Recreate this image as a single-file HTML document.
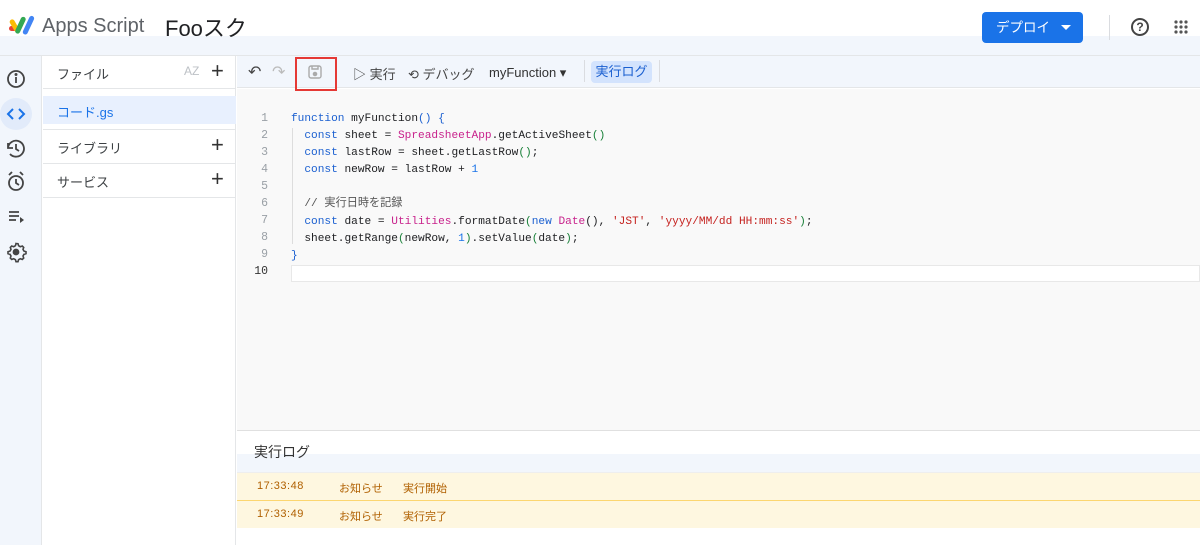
<!DOCTYPE html><html><head><meta charset="utf-8"><style>
*{margin:0;padding:0;box-sizing:border-box}
body{width:1200px;height:545px;overflow:hidden;background:#fff;font-family:"Liberation Sans","Noto Sans CJK JP",sans-serif;position:relative;color:#3c4043}
.a{position:absolute}
.code{font-family:"Liberation Mono","Noto Sans CJK JP",monospace;font-size:11.15px;color:#202124}
.ln{position:absolute;left:236px;width:32px;text-align:right;color:#9aa0a6;font-family:"Liberation Mono",monospace;font-size:11.5px}
.k{color:#1a5fd0}.p{color:#c8228c}.s{color:#c5221f}.n{color:#1a73e8}.g{color:#188038}
</style></head><body>
<div class="a" style="left:0;top:36px;width:1200px;height:19px;background:#f2f6fc"></div>
<div class="a" style="left:0;top:55px;width:1200px;height:1px;background:#e4e6e8"></div>
<svg class="a" style="left:9px;top:14px" width="30" height="24" viewBox="0 0 30 24">
<rect x="0" y="12" width="12" height="5" rx="2.5" fill="#ea4335"/>
<rect x="3" y="5" width="5" height="14" rx="2.5" transform="rotate(-30 5 12)" fill="#fbbc04"/>
<rect x="9" y="2" width="5" height="18" rx="2.5" transform="rotate(25 11 11)" fill="#34a853"/>
<rect x="17" y="1" width="5" height="20" rx="2.5" transform="rotate(25 19 11)" fill="#4285f4"/>
</svg>
<div class="a" style="left:42px;top:15px;font-size:20px;color:#5f6368">Apps Script</div>
<div class="a" style="left:165px;top:11px;font-size:22px;color:#202124">Fooスク</div>
<div class="a" style="left:982px;top:12px;width:101px;height:31px;background:#1a73e8;border-radius:4px;color:#fff;font-size:13.5px;line-height:31px;padding-left:14px">デプロイ<span style="position:absolute;left:79px;top:13px;border-left:5px solid transparent;border-right:5px solid transparent;border-top:5px solid #fff"></span></div>
<div class="a" style="left:1109px;top:15px;width:1px;height:25px;background:#dadce0"></div>
<div class="a" style="left:1131px;top:18px;width:18px;height:18px;border:2px solid #444;border-radius:50%;font-size:12px;font-weight:bold;text-align:center;line-height:14px;color:#444">?</div>
<svg class="a" style="left:1174px;top:20px" width="14" height="14"><g fill="#555"><circle cx="2" cy="2" r="1.6"/><circle cx="7" cy="2" r="1.6"/><circle cx="12" cy="2" r="1.6"/><circle cx="2" cy="7" r="1.6"/><circle cx="7" cy="7" r="1.6"/><circle cx="12" cy="7" r="1.6"/><circle cx="2" cy="12" r="1.6"/><circle cx="7" cy="12" r="1.6"/><circle cx="12" cy="12" r="1.6"/></g></svg>
<div class="a" style="left:0;top:56px;width:42px;height:489px;background:#f2f6fc;border-right:1px solid #e4e6e8"></div>
<svg class="a" style="left:0;top:56px" width="42" height="220" fill="none" stroke="#444" stroke-width="1.8">
<circle cx="16" cy="23" r="8"/><line x1="16" y1="21" x2="16" y2="27"/><circle cx="16" cy="18.5" r="0.6" fill="#444"/>
<circle cx="16" cy="58" r="16" fill="#e2ebfa" stroke="none"/><path d="M13 53l-5 5 5 5M19 53l5 5-5 5" stroke="#1a73e8" stroke-width="2"/>
<path d="M8 92a8 8 0 1 1 2 6M8 87v5h5M16 88v5l3 2"/>
<circle cx="16" cy="127" r="7"/><path d="M16 123v4l3 2M9 119l3-3M23 119l-3-3"/>
<path d="M9 156h10M9 160h10M9 164h7" /><path d="M20 161l4 3-4 3z" fill="#444" stroke="none"/>
<circle cx="16" cy="196" r="2.5" fill="#444"/><path d="M16 187.5l2 .2.6 2 1.7 1 2-.7 1.4 1.4-.7 2 1 1.7 2 .6v2l-2 .6-1 1.7.7 2-1.4 1.4-2-.7-1.7 1-.6 2h-2l-.6-2-1.7-1-2 .7-1.4-1.4.7-2-1-1.7-2-.6v-2l2-.6 1-1.7-.7-2 1.4-1.4 2 .7 1.7-1 .6-2z" stroke-width="1.6"/>
</svg>
<div class="a" style="left:43px;top:56px;width:193px;height:489px;border-right:1px solid #e4e6e8"></div>
<div class="a" style="left:57px;top:64px;font-size:13px">ファイル</div>
<div class="a" style="left:184px;top:64px;font-size:12px;color:#bdc1c6">AZ</div>
<div class="a" style="left:211px;top:58px;font-size:22px;color:#333;font-weight:300">+</div>
<div class="a" style="left:43px;top:88px;width:193px;height:1px;background:#e4e6e8"></div>
<div class="a" style="left:43px;top:96px;width:193px;height:28px;background:#e8f0fe"></div>
<div class="a" style="left:57px;top:102px;font-size:13px;color:#1a73e8">コード.gs</div>
<div class="a" style="left:43px;top:129px;width:193px;height:1px;background:#e4e6e8"></div>
<div class="a" style="left:57px;top:138px;font-size:13px">ライブラリ</div>
<div class="a" style="left:211px;top:132px;font-size:22px;color:#333">+</div>
<div class="a" style="left:43px;top:163px;width:193px;height:1px;background:#e4e6e8"></div>
<div class="a" style="left:57px;top:172px;font-size:13px">サービス</div>
<div class="a" style="left:211px;top:166px;font-size:22px;color:#333">+</div>
<div class="a" style="left:43px;top:197px;width:193px;height:1px;background:#e4e6e8"></div>
<div class="a" style="left:237px;top:56px;width:963px;height:32px;background:#f2f6fc;border-bottom:1px solid #e4e6e8"></div>
<div class="a" style="left:237px;top:89px;width:963px;height:341px;background:#f9f9f9"></div>
<div class="a" style="left:248px;top:62px;font-size:16px;color:#444">↶</div>
<div class="a" style="left:272px;top:62px;font-size:16px;color:#bbb">↷</div>
<div class="a" style="left:295px;top:57px;width:42px;height:34px;border:2px solid #e53935"></div>
<svg class="a" style="left:308px;top:65px" width="14" height="14" fill="none" stroke="#aaa" stroke-width="1.4"><rect x="1" y="1" width="12" height="12" rx="2"/><path d="M4 1v3h6V1"/><circle cx="7" cy="9" r="1.6" fill="#aaa"/></svg>
<div class="a" style="left:353px;top:64px;font-size:13px;color:#444">▷ 実行</div>
<div class="a" style="left:408px;top:64px;font-size:13px;color:#444">⟲ デバッグ</div>
<div class="a" style="left:489px;top:65px;font-size:13px;color:#333">myFunction ▾</div>
<div class="a" style="left:584px;top:60px;width:1px;height:22px;background:#dadce0"></div>
<div class="a" style="left:591px;top:61px;width:61px;height:22px;background:#d3e3fd;border-radius:4px;color:#1a5fd0;font-size:13px;line-height:22px;text-align:center">実行ログ</div>
<div class="a" style="left:659px;top:60px;width:1px;height:22px;background:#dadce0"></div>
<div class="a" style="left:291px;top:265px;width:909px;height:17px;border:1px solid #e8e8e8;background:#fff"></div>
<div class="a" style="left:292px;top:128px;width:1px;height:116px;background:#ddd"></div>
<div class="ln" style="top:112px">1</div><div class="ln" style="top:129px">2</div><div class="ln" style="top:146px">3</div><div class="ln" style="top:163px">4</div><div class="ln" style="top:180px">5</div><div class="ln" style="top:197px">6</div><div class="ln" style="top:214px">7</div><div class="ln" style="top:231px">8</div><div class="ln" style="top:248px">9</div><div class="ln" style="top:265px;color:#333">10</div>
<div class="a code" style="left:291px;top:111px;line-height:17.1px;white-space:pre"><span class="k">function</span> myFunction<span class="k">() {</span>
  <span class="k">const</span> sheet = <span class="p">SpreadsheetApp</span>.getActiveSheet<span class="g">()</span>
  <span class="k">const</span> lastRow = sheet.getLastRow<span class="g">()</span>;
  <span class="k">const</span> newRow = lastRow + <span class="n">1</span>

  <span style="color:#555">// 実行日時を記録</span>
  <span class="k">const</span> date = <span class="p">Utilities</span>.formatDate<span class="g">(</span><span class="k">new</span> <span class="p">Date</span>(), <span class="s">'JST'</span>, <span class="s">'yyyy/MM/dd HH:mm:ss'</span><span class="g">)</span>;
  sheet.getRange<span class="g">(</span>newRow, <span class="n">1</span><span class="g">)</span>.setValue<span class="g">(</span>date<span class="g">)</span>;
<span class="k">}</span></div>
<div class="a" style="left:237px;top:430px;width:963px;height:1px;background:#e0e0e0"></div>
<div class="a" style="left:237px;top:454px;width:963px;height:18px;background:#f2f6fc"></div>
<div class="a" style="left:254px;top:442px;font-size:14px;color:#333">実行ログ</div>
<div class="a" style="left:237px;top:472px;width:963px;height:28px;background:#fef7e0;border-top:1px solid #eee"></div>
<div class="a" style="left:237px;top:500px;width:963px;height:1px;background:#fcd670"></div>
<div class="a" style="left:237px;top:501px;width:963px;height:27px;background:#fef7e0"></div>
<div class="a" style="left:257px;top:480px;font-size:11px;color:#b06000;letter-spacing:0.5px">17:33:48</div>
<div class="a" style="left:339px;top:480px;font-size:11px;color:#b06000">お知らせ</div>
<div class="a" style="left:403px;top:480px;font-size:11px;color:#b06000">実行開始</div>
<div class="a" style="left:257px;top:508px;font-size:11px;color:#b06000;letter-spacing:0.5px">17:33:49</div>
<div class="a" style="left:339px;top:508px;font-size:11px;color:#b06000">お知らせ</div>
<div class="a" style="left:403px;top:508px;font-size:11px;color:#b06000">実行完了</div>
</body></html>
